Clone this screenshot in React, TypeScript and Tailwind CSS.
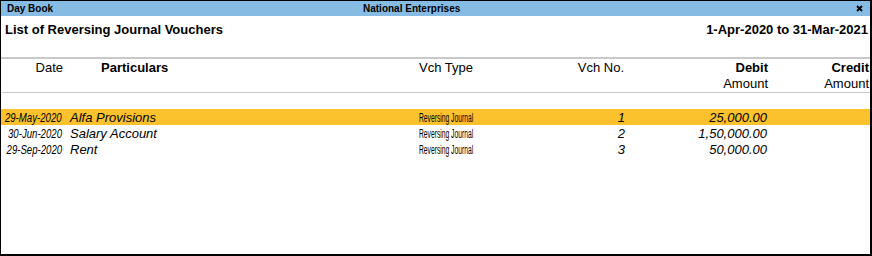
import React from 'react';

const rows = [
  { date: '29-May-2020', particulars: 'Alfa Provisions', type: 'Reversing Journal', no: '1', debit: '25,000.00', active: true },
  { date: '30-Jun-2020', particulars: 'Salary Account', type: 'Reversing Journal', no: '2', debit: '1,50,000.00' },
  { date: '29-Sep-2020', particulars: 'Rent', type: 'Reversing Journal', no: '3', debit: '50,000.00' },
];

const cols = 'grid grid-cols-[62px_356px_112px_96px_141px_101px]';

export default function App() {
  return (
    <div className="w-[872px] h-[256px] bg-white border-t border-l border-r-2 border-b-2 border-black flex flex-col font-['Liberation_Sans',Arial,sans-serif] text-black overflow-hidden">
      {/* title bar */}
      <div className="h-[15px] bg-[#86bbe3] flex items-center px-[6px] text-[10px] font-bold leading-none relative shrink-0">
        <span>Day Book</span>
        <span className="absolute left-[362px]">National Enterprises</span>
        <svg className="ml-auto mr-[1px]" width="7" height="7" viewBox="0 0 7 7">
          <path d="M1 1L6 6M6 1L1 6" stroke="#000" strokeWidth="1.8" />
        </svg>
      </div>

      {/* report heading */}
      <div className="flex justify-between items-center pl-[4px] pr-[2px] pt-[2px] h-[24px] text-[13px] font-bold leading-none">
        <span>List of Reversing Journal Vouchers</span>
        <span>1-Apr-2020 to 31-Mar-2021</span>
      </div>

      <div className="mt-[17px] h-[2px] bg-[#c8c8c8]" />

      {/* column headers */}
      <div className={`${cols} text-[13px] leading-[16px] pt-[1px] h-[33px]`}>
        <div className="text-right">Date</div>
        <div className="pl-[38px] font-bold">Particulars</div>
        <div>Vch Type</div>
        <div className="text-right pr-[3px]">Vch No.</div>
        <div className="text-right">
          <div className="font-bold">Debit</div>
          <div>Amount</div>
        </div>
        <div className="text-right">
          <div className="font-bold">Credit</div>
          <div>Amount</div>
        </div>
      </div>

      <div className="h-[1px] bg-[#c8c8c8]" />

      {/* entries */}
      <div className="mt-[16px] flex flex-col">
        {rows.map((r) => (
          <div key={r.no} className={`${cols} h-[16px] items-center italic text-[13px] leading-none whitespace-nowrap ${r.active ? 'bg-[#fbc22e]' : ''}`}>
            <div className="flex justify-end pr-[1px]">
              <span className="shrink-0 inline-block origin-right scale-x-[0.74]">{r.date}</span>
            </div>
            <div className="pl-[7px]">{r.particulars}</div>
            <div className="not-italic">
              <span className="inline-block origin-left scale-x-[0.56] text-[12px]">{r.type}</span>
            </div>
            <div className="text-right pr-[2px]">{r.no}</div>
            <div className="text-right pr-[1px]">{r.debit}</div>
            <div />
          </div>
        ))}
      </div>
    </div>
  );
}
